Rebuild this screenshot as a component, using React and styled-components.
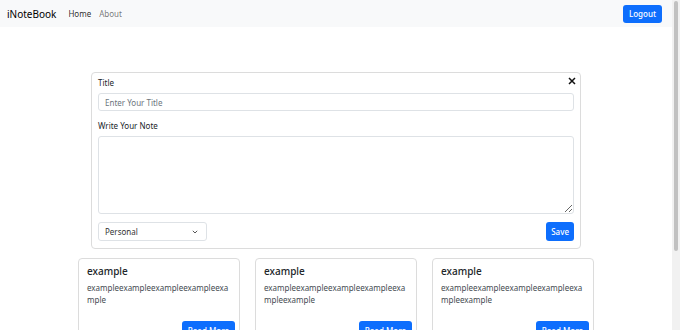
import React from "react";
import styled, { createGlobalStyle } from "styled-components";

const Global = createGlobalStyle`
  body {
    margin: 0;
    padding-right: 8px;
    background: #fff;
    font-family: "Noto Sans", "Open Sans", sans-serif;
    color: #212529;
  }
`;

const ScrollTrack = styled.div`
  position: fixed;
  top: 0;
  right: 0;
  width: 8px;
  height: 100vh;
  background: #f1f1f1;
  display: flex;
  justify-content: center;
  padding-top: 1px;
  box-sizing: border-box;
`;

const ScrollThumb = styled.div`
  width: 4px;
  height: 250px;
  border-radius: 2px;
  background: #c1c1c1;
`;

const Nav = styled.nav`
  height: 27px;
  background: #f8f9fa;
  display: flex;
  align-items: center;
  padding: 0 10px 0 7px;
`;

const Brand = styled.a`
  font-size: 10px;
  color: #000;
  margin-right: 12px;
  line-height: 14px;
`;

const NavLink = styled.a`
  font-size: 8px;
  color: ${(p) => (p.$active ? "rgba(0,0,0,0.85)" : "rgba(0,0,0,0.55)")};
  margin-right: 8px;
  line-height: 12px;
`;

const Spacer = styled.div`
  flex: 1;
`;

const Button = styled.button`
  background: #0d6efd;
  color: #fff;
  border: none;
  border-radius: 3px;
  font-family: "Noto Sans", sans-serif;
  font-size: 8px;
  font-weight: 500;
  height: ${(p) => p.$h || 19}px;
  padding: 0 ${(p) => p.$px || 6}px;
  line-height: 1;
  cursor: pointer;
`;

const Main = styled.main`
  padding-top: 45px;
  display: flex;
  flex-direction: column;
  align-items: center;
`;

const FormCard = styled.div`
  position: relative;
  width: 490px;
  box-sizing: border-box;
  border: 1px solid #dcdcdc;
  border-radius: 4px;
  padding: 4px 6px 7px;
`;

const Close = styled.button`
  position: absolute;
  top: 3px;
  right: 3px;
  width: 10px;
  height: 10px;
  padding: 0;
  border: none;
  background: transparent;
  display: flex;
  align-items: center;
  justify-content: center;
`;

const Label = styled.label`
  display: block;
  font-size: 8px;
  line-height: 12px;
  margin-bottom: 4px;
`;

const Input = styled.input`
  display: block;
  width: 100%;
  box-sizing: border-box;
  height: 18px;
  border: 1px solid #dee2e6;
  border-radius: 3px;
  padding: 0 6px;
  font-family: "Noto Sans", sans-serif;
  font-size: 8px;
  margin-bottom: 9px;
  &::placeholder { color: #6c757d; }
`;

const TextArea = styled.textarea`
  display: block;
  width: 100%;
  box-sizing: border-box;
  height: 78px;
  border: 1px solid #dee2e6;
  border-radius: 3px;
  padding: 4px 6px;
  font-family: "Noto Sans", sans-serif;
  font-size: 8px;
  margin: 0 0 8px;
`;

const FooterRow = styled.div`
  display: flex;
  justify-content: space-between;
  align-items: center;
`;

const SelectBox = styled.div`
  width: 109px;
  height: 19px;
  box-sizing: border-box;
  border: 1px solid #dee2e6;
  border-radius: 3px;
  display: flex;
  align-items: center;
  justify-content: space-between;
  padding: 0 8px 0 6px;
  font-size: 8px;
  color: #333;
`;

const Cards = styled.div`
  margin-top: 9px;
  width: 516px;
  display: grid;
  grid-template-columns: repeat(3, 162px);
  gap: 15px;
`;

const NoteCard = styled.div`
  border: 1px solid #dcdcdc;
  border-radius: 4px;
  padding: 6px 4px 8px 8px;
  display: flex;
  flex-direction: column;
`;

const NoteTitle = styled.h5`
  margin: 0 0 5px;
  font-size: 10px;
  font-weight: 500;
  line-height: 12px;
  color: #212529;
`;

const NoteText = styled.p`
  margin: 0 4px 15px 0;
  font-size: 8px;
  line-height: 12px;
  color: #444a50;
  overflow-wrap: anywhere;
`;

const CardFoot = styled.div`
  display: flex;
  justify-content: flex-end;
`;

const notes = [
  { title: "example", text: "exampleexampleexampleexampleexample" },
  { title: "example", text: "exampleexampleexampleexampleexampleexample" },
  { title: "example", text: "exampleexampleexampleexampleexampleexample" },
];

export default function App() {
  return (
    <>
      <Global />
      <Nav>
        <Brand>iNoteBook</Brand>
        <NavLink $active>Home</NavLink>
        <NavLink>About</NavLink>
        <Spacer />
        <Button $h={18} $px={6}>Logout</Button>
      </Nav>
      <Main>
        <FormCard>
          <Close aria-label="close">
            <svg width="8" height="8" viewBox="0 0 8 8">
              <path d="M1 1 L7 7 M7 1 L1 7" stroke="#111" strokeWidth="1.5" />
            </svg>
          </Close>
          <Label>Title</Label>
          <Input placeholder="Enter Your Title" />
          <Label>Write Your Note</Label>
          <TextArea />
          <FooterRow>
            <SelectBox>
              <span>Personal</span>
              <svg width="6" height="4" viewBox="0 0 6 4">
                <path d="M0.8 0.8 L3 3 L5.2 0.8" fill="none" stroke="#444" strokeWidth="0.9" />
              </svg>
            </SelectBox>
            <Button $px={5}>Save</Button>
          </FooterRow>
        </FormCard>
        <Cards>
          {notes.map((n, i) => (
            <NoteCard key={i}>
              <NoteTitle>{n.title}</NoteTitle>
              <NoteText>{n.text}</NoteText>
              <CardFoot>
                <Button $px={6}>Read More</Button>
              </CardFoot>
            </NoteCard>
          ))}
        </Cards>
      </Main>
      <ScrollTrack>
        <ScrollThumb />
      </ScrollTrack>
    </>
  );
}
